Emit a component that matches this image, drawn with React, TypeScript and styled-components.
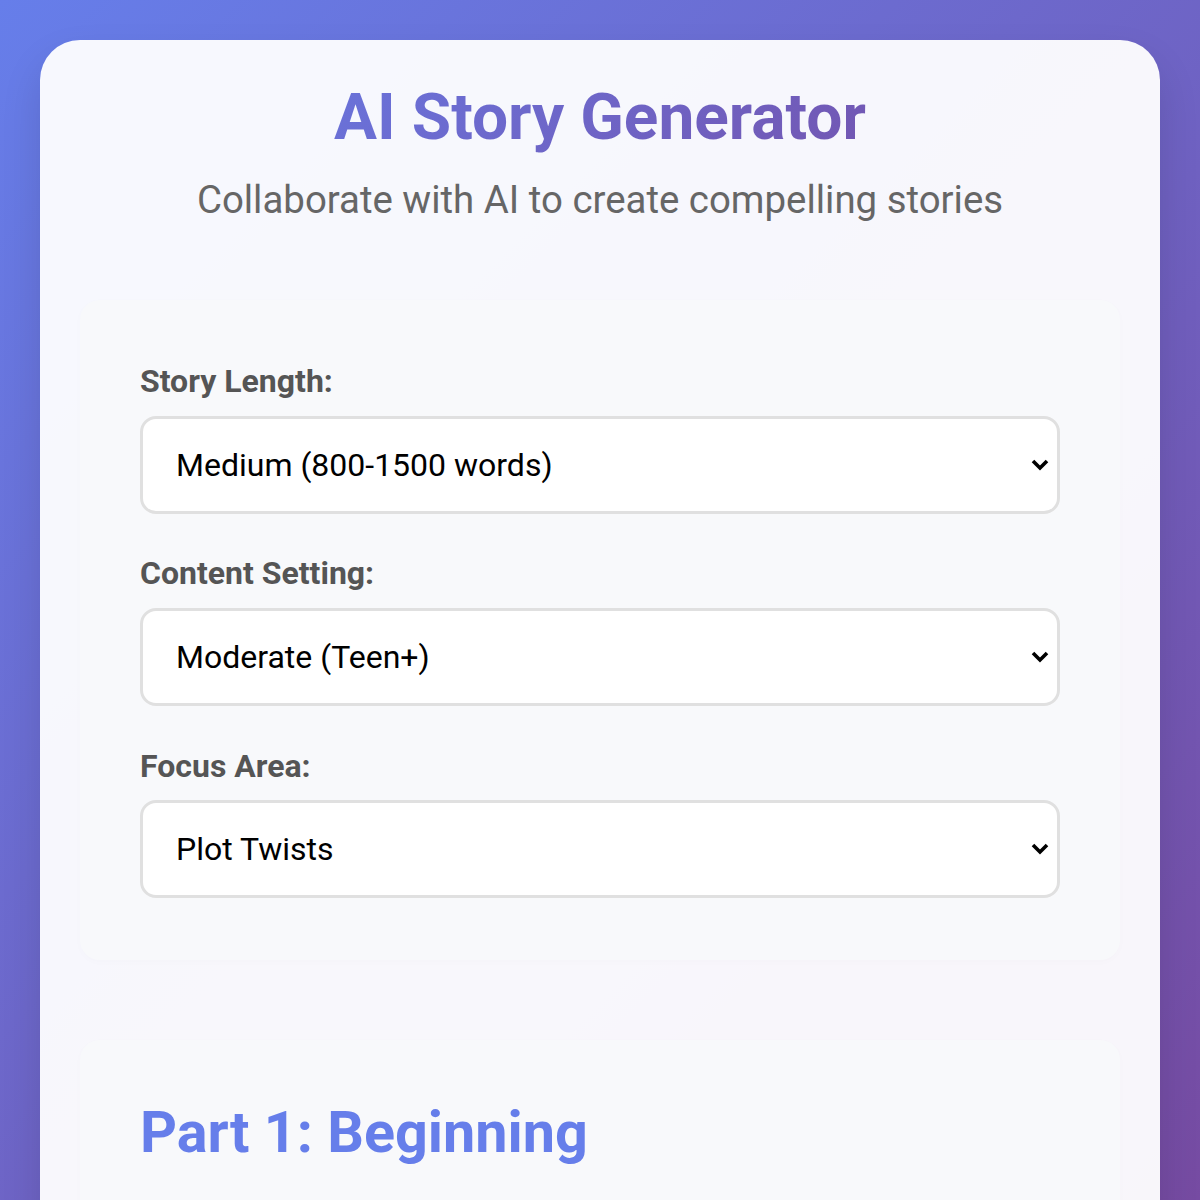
import styled, { createGlobalStyle } from "styled-components";

const GlobalStyle = createGlobalStyle`
  * {
    box-sizing: border-box;
  }
  body {
    margin: 0;
    min-height: 100vh;
    font-family: Roboto, "Liberation Sans", sans-serif;
    background: linear-gradient(135deg, #667eea 0%, #764ba2 100%);
    background-attachment: fixed;
    padding: 40px;
  }
`;

const Container = styled.div`
  background: rgba(255, 255, 255, 0.95);
  border-radius: 40px;
  padding: 40px 40px 60px;
  box-shadow: 0 20px 40px rgba(0, 0, 0, 0.12);
`;

const Header = styled.header`
  text-align: center;
  margin-bottom: 78px;
`;

const Title = styled.h1`
  margin: 0 0 22px;
  font-size: 64px;
  font-weight: 700;
  background: linear-gradient(135deg, #667eea 0%, #764ba2 100%);
  -webkit-background-clip: text;
  background-clip: text;
  color: transparent;
`;

const Subtitle = styled.p`
  margin: 0;
  font-size: 38.4px;
  font-weight: 400;
  color: #666;
`;

const Panel = styled.section`
  background: #f8f9fb;
  border-radius: 20px;
  padding: 63px 60px 62px;
  margin-bottom: 80px;
  box-shadow: 0 2px 8px rgba(0, 0, 0, 0.015);
  display: flex;
  flex-direction: column;
  gap: 41.5px;
`;

const StoryPanel = styled(Panel)`
  padding-top: 59px;
`;

const Field = styled.div`
  display: flex;
  flex-direction: column;
`;

const Label = styled.label`
  font-size: 32px;
  line-height: 1.15;
  font-weight: 700;
  color: #555;
  margin-bottom: 16px;
`;

const SelectWrap = styled.div`
  position: relative;
`;

const Select = styled.select`
  display: block;
  width: 100%;
  height: 98px;
  padding: 0 60px 0 33px;
  font-family: Roboto, "Liberation Sans", sans-serif;
  font-size: 32px;
  color: #000;
  background: #fff;
  border: 3px solid #e0e0e0;
  border-radius: 16px;
  outline: none;
  appearance: none;
  -webkit-appearance: none;
`;

const Chevron = styled.svg`
  position: absolute;
  right: 11px;
  top: 50%;
  transform: translateY(-50%);
  pointer-events: none;
`;

const PartTitle = styled.h2`
  margin: 0;
  font-size: 57.5px;
  font-weight: 700;
  color: #667eea;
`;

const fields = [
  {
    label: "Story Length:",
    value: "medium",
    options: [
      ["short", "Short (300-800 words)"],
      ["medium", "Medium (800-1500 words)"],
      ["long", "Long (1500-3000 words)"],
    ],
  },
  {
    label: "Content Setting:",
    value: "moderate",
    options: [
      ["family", "Family Friendly"],
      ["moderate", "Moderate (Teen+)"],
      ["mature", "Mature (18+)"],
    ],
  },
  {
    label: "Focus Area:",
    value: "twists",
    options: [
      ["characters", "Character Development"],
      ["twists", "Plot Twists"],
      ["world", "World Building"],
    ],
  },
];

function App() {
  return (
    <>
      <GlobalStyle />
      <Container>
        <Header>
          <Title>AI Story Generator</Title>
          <Subtitle>Collaborate with AI to create compelling stories</Subtitle>
        </Header>
        <Panel>
          {fields.map((field) => (
            <Field key={field.label}>
              <Label>{field.label}</Label>
              <SelectWrap>
                <Select defaultValue={field.value}>
                  {field.options.map(([value, text]) => (
                    <option key={value} value={value}>
                      {text}
                    </option>
                  ))}
                </Select>
                <Chevron width="18" height="13" viewBox="0 0 18 13">
                  <path
                    d="M2 2.5 L9 9.5 L16 2.5"
                    fill="none"
                    stroke="#000"
                    strokeWidth="3.6"
                  />
                </Chevron>
              </SelectWrap>
            </Field>
          ))}
        </Panel>
        <StoryPanel>
          <PartTitle>Part 1: Beginning</PartTitle>
        </StoryPanel>
      </Container>
    </>
  );
}

export default App;
